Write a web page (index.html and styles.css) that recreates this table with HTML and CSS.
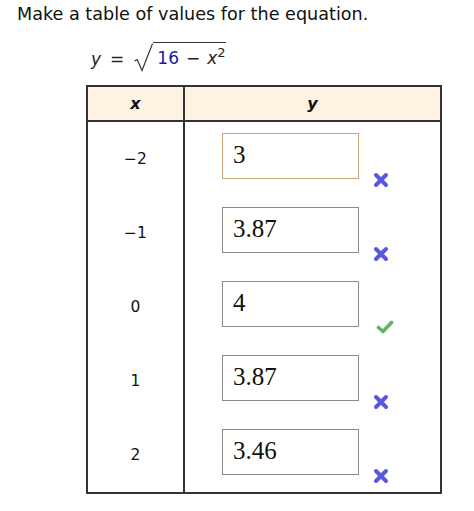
FILE: index.html
```html
<!DOCTYPE html>
<html>
<head>
<meta charset="utf-8">
<link rel="stylesheet" href="styles.css">
</head>
<body>
<p class="prompt">Make a table of values for the equation.</p>
<div class="equation">
  <span class="var">y</span><span class="eq">=</span><svg class="radical" width="19" height="29" viewBox="0 0 19 29"><path d="M0.5 18 L3.2 16.5 L8 27.5 L18.5 0.6" fill="none" stroke="#333" stroke-width="1.2"/></svg><span class="radicand"><span class="num">16</span><span class="minus">−</span><span class="var">x</span><sup>2</sup></span>
</div>
<div class="table">
  <div class="cell head xcol">x</div>
  <div class="cell head">y</div>

  <div class="cell xcol val">−2</div>
  <div class="cell ycell"><div class="box focus">3</div><svg class="icon" width="16" height="16" viewBox="0 0 16 16"><path d="M3 3 L13 13 M13 3 L3 13" stroke="#5757e0" stroke-width="4" stroke-linecap="round"/></svg></div>

  <div class="cell xcol val">−1</div>
  <div class="cell ycell"><div class="box">3.87</div><svg class="icon" width="16" height="16" viewBox="0 0 16 16"><path d="M3 3 L13 13 M13 3 L3 13" stroke="#5757e0" stroke-width="4" stroke-linecap="round"/></svg></div>

  <div class="cell xcol val">0</div>
  <div class="cell ycell"><div class="box">4</div><svg class="icon check" width="18" height="14" viewBox="0 0 18 14"><path d="M2.5 7.5 L7 11.5 L15.5 2.5" fill="none" stroke="#5cb860" stroke-width="3.6" stroke-linecap="round" stroke-linejoin="round"/></svg></div>

  <div class="cell xcol val">1</div>
  <div class="cell ycell"><div class="box">3.87</div><svg class="icon" width="16" height="16" viewBox="0 0 16 16"><path d="M3 3 L13 13 M13 3 L3 13" stroke="#5757e0" stroke-width="4" stroke-linecap="round"/></svg></div>

  <div class="cell xcol val">2</div>
  <div class="cell ycell"><div class="box">3.46</div><svg class="icon" width="16" height="16" viewBox="0 0 16 16"><path d="M3 3 L13 13 M13 3 L3 13" stroke="#5757e0" stroke-width="4" stroke-linecap="round"/></svg></div>
</div>
</body>
</html>
```
FILE: styles.css
```css
html, body {
  margin: 0;
  padding: 0;
  background: #fff;
}
body {
  font-family: "DejaVu Sans", Verdana, sans-serif;
  color: #111;
}
.prompt {
  margin: 0;
  padding: 3px 0 0 17px;
  font-size: 17.6px;
  line-height: 22px;
}
.equation {
  display: flex;
  align-items: flex-end;
  padding: 15px 0 0 91px;
  height: 29px;
  font-size: 17px;
  color: #222;
}
.equation .var {
  font-style: italic;
}
.eq {
  margin: 0 10px 0 9px;
}
.radical {
  display: block;
  margin-bottom: -3px;
}
.radicand {
  border-top: 1.2px solid #333;
  padding: 4px 0 0 4px;
  line-height: 22px;
}
.num {
  color: #1a1aa8;
}
.minus {
  margin: 0 7px;
}
.radicand sup {
  font-size: 13px;
  vertical-align: 7px;
  line-height: 0;
}
.table {
  box-sizing: border-box;
  margin: 16px 0 0 86px;
  width: 356px;
  border: 2px solid #333;
  display: grid;
  grid-template-columns: 97px 1fr;
  grid-template-rows: 35px repeat(5, 74px);
}
.cell {
  box-sizing: border-box;
}
.xcol {
  border-right: 2px solid #333;
}
.head {
  background: #fdf3e0;
  border-bottom: 2px solid #333;
  display: flex;
  align-items: center;
  justify-content: center;
  font-weight: bold;
  font-style: italic;
  font-size: 16px;
}
.val {
  display: flex;
  align-items: center;
  justify-content: center;
  font-size: 15.5px;
}
.ycell {
  display: flex;
  align-items: flex-start;
  padding: 11px 0 0 37px;
}
.box {
  box-sizing: border-box;
  width: 137px;
  height: 46px;
  border: 1.5px solid #8a8a8a;
  font-family: "Liberation Serif", "Times New Roman", serif;
  font-size: 25px;
  line-height: 28px;
  padding: 7px 0 0 10px;
  color: #111;
  background: #fff;
}
.box.focus {
  border-color: #caa57c;
}
.icon {
  display: block;
  margin: 39px 0 0 14px;
}
.icon.check {
  margin: 39px 0 0 17px;
}
```
